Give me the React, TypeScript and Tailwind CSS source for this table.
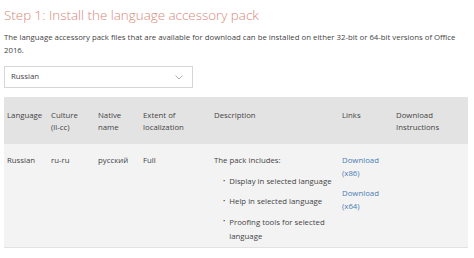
import React from "react";

export default function App() {
  const font = { fontFamily: '"Open Sans", "Noto Sans", sans-serif' };
  return (
    <div className="w-[474px] h-[258px] bg-white overflow-hidden text-[#444]" style={font}>
      <div className="pl-[4px] pr-[4px]">
        <h1 className="text-[13.4px] leading-[20px] pt-[5px] text-[#d6897a] font-light">
          Step 1: Install the language accessory pack
        </h1>
        <p className="mt-[6px] text-[7.8px] leading-[13px] text-[#444] w-[464px]">
          The language accessory pack files that are available for download can be installed on either 32-bit or 64-bit versions of Office 2016.
        </p>
        <div className="mt-[9px] w-[189px] h-[22px] border border-[#d6d6d6] bg-white flex items-center justify-between pl-[6px] pr-[9px]">
          <span className="text-[7.8px] text-[#444]">Russian</span>
          <svg width="8" height="5" viewBox="0 0 8 5" fill="none">
            <path d="M0.5 0.5 L4 4 L7.5 0.5" stroke="#999" strokeWidth="0.8" />
          </svg>
        </div>
        <div className="mt-[9px] w-[464px] text-[7.8px] leading-[13px]">
          <div className="grid grid-cols-[44px_47px_45px_71px_128px_54px_75px] bg-[#e3e3e3] h-[47px] pt-[12px] pl-[3px] leading-[12px] text-[#444]">
            <div>Language</div>
            <div>Culture<br />(ll-cc)</div>
            <div>Native<br />name</div>
            <div>Extent of<br />localization</div>
            <div>Description</div>
            <div>Links</div>
            <div>Download<br />Instructions</div>
          </div>
          <div className="grid grid-cols-[44px_47px_45px_71px_128px_54px_75px] bg-[#f3f3f3] h-[104px] pt-[10px] pl-[3px] border-b border-[#e2e2e2]">
            <div>Russian</div>
            <div>ru-ru</div>
            <div>русский</div>
            <div>Full</div>
            <div>
              <div>The pack includes:</div>
              <ul className="mt-[8px] flex flex-col gap-[7px] pl-[9px]">
                <li className="flex gap-[4px]"><span className="text-[6px]">•</span><span>Display in selected language</span></li>
                <li className="flex gap-[4px]"><span className="text-[6px]">•</span><span>Help in selected language</span></li>
                <li className="flex gap-[4px]"><span className="text-[6px]">•</span><span className="leading-[14px]">Proofing tools for selected<br />language</span></li>
              </ul>
            </div>
            <div className="text-[#4a7db4]">
              <div>Download<br />(x86)</div>
              <div className="mt-[7px]">Download<br />(x64)</div>
            </div>
            <div></div>
          </div>
        </div>
      </div>
    </div>
  );
}
